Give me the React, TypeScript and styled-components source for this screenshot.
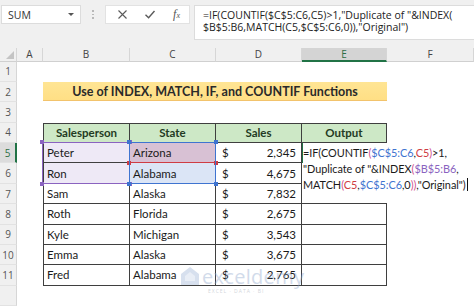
import styled, { createGlobalStyle } from "styled-components";

const GlobalStyle = createGlobalStyle`
  html, body {
    margin: 0;
    padding: 0;
    background: #ffffff;
  }
`;

const Window = styled.div`
  position: relative;
  width: 474px;
  height: 306px;
  overflow: hidden;
  display: flex;
  flex-direction: column;
  background: #f0f0f0;
  font-family: Lato, "Liberation Sans", sans-serif;
`;

const FormulaRow = styled.div`
  height: 49px;
  box-sizing: border-box;
  padding: 5px 0 0 1px;
  display: flex;
  align-items: flex-start;
`;

const NameBox = styled.div`
  width: 80px;
  height: 19px;
  box-sizing: border-box;
  background: #ffffff;
  border: 1px solid #dcdcdc;
  display: flex;
  align-items: center;
  justify-content: space-between;
  padding: 0 6px 0 6px;
  font-family: "Open Sans", sans-serif;
  font-size: 10.5px;
  color: #333;
`;

const DropArrow = styled.span`
  width: 0;
  height: 0;
  border-left: 3px solid transparent;
  border-right: 3px solid transparent;
  border-top: 3px solid #555;
`;

const Grip = styled.div`
  width: 24px;
  height: 19px;
  display: flex;
  flex-direction: column;
  align-items: center;
  justify-content: center;
  gap: 2px;
`;

const GripDot = styled.span`
  width: 1.5px;
  height: 1.5px;
  background: #b8b8b8;
`;

const FxGroup = styled.div`
  width: 85px;
  height: 19px;
  box-sizing: border-box;
  background: #ffffff;
  border: 1px solid #e2e2e2;
  display: grid;
  grid-template-columns: repeat(3, 27px);
  padding-left: 3px;
  align-items: center;
  justify-items: center;
  color: #5a5a5a;
`;

const FxText = styled.span`
  font-family: "Liberation Serif", serif;
  font-style: italic;
  font-size: 12px;
  color: #555;
  small {
    font-size: 8px;
  }
`;

const FormulaBox = styled.div`
  flex: 1;
  margin-left: 4px;
  height: 35px;
  box-sizing: border-box;
  background: #ffffff;
  border: 1px solid #dcdcdc;
  border-right: none;
  padding: 3px 0 0 8px;
  font-family: "Open Sans", sans-serif;
  font-size: 10.5px;
  line-height: 12px;
  color: #222;
  white-space: nowrap;
`;

const Sheet = styled.div`
  flex: 1;
  display: grid;
  grid-template-columns: 17px 26px 87px 86px 86px 85px 87px;
  grid-template-rows: 14px repeat(12, 20.36px);
  background: #ffffff;
`;

const ColHead = styled.div<{ $col: number; $active?: boolean }>`
  grid-row: 1;
  grid-column: ${(p) => p.$col};
  box-sizing: border-box;
  background: ${(p) => (p.$active ? "#d4d4d4" : "#f0f0f0")};
  border-right: 1px solid #d6d6d6;
  border-bottom: ${(p) => (p.$active ? "2px solid #217346" : "1px solid #d0d0d0")};
  display: flex;
  align-items: center;
  justify-content: center;
  font-family: "Open Sans", sans-serif;
  font-size: 10px;
  color: ${(p) => (p.$active ? "#2c6e45" : "#444")};
`;

const Corner = styled.div`
  grid-row: 1;
  grid-column: 1;
  box-sizing: border-box;
  background: #f0f0f0;
  border-right: 1px solid #d6d6d6;
  border-bottom: 1px solid #d0d0d0;
  position: relative;
  &::after {
    content: "";
    position: absolute;
    right: 2px;
    bottom: 2px;
    border-left: 8px solid transparent;
    border-bottom: 8px solid #c4c4c4;
  }
`;

const RowHead = styled.div<{ $row: number; $active?: boolean }>`
  grid-row: ${(p) => p.$row + 1};
  grid-column: 1;
  box-sizing: border-box;
  background: ${(p) => (p.$active ? "#dcdcdc" : "#f0f0f0")};
  border-right: ${(p) => (p.$active ? "2px solid #217346" : "1px solid #d6d6d6")};
  border-bottom: 1px solid #e2e2e2;
  display: flex;
  align-items: center;
  justify-content: center;
  font-family: "Open Sans", sans-serif;
  font-size: 10px;
  color: ${(p) => (p.$active ? "#2c6e45" : "#555")};
`;

const Cell = styled.div<{
  $row: number;
  $col: number;
  $grid?: boolean;
  $top?: boolean;
  $left?: boolean;
  $fill?: string;
  $head?: boolean;
  $num?: boolean;
}>`
  grid-row: ${(p) => p.$row + 1};
  grid-column: ${(p) => p.$col};
  box-sizing: border-box;
  background: ${(p) => p.$fill || "#ffffff"};
  border-right: ${(p) => (p.$grid ? "1px solid #3f3f3f" : "none")};
  border-bottom: ${(p) => (p.$grid ? "1px solid #3f3f3f" : "none")};
  border-top: ${(p) => (p.$top ? "1px solid #3f3f3f" : "none")};
  border-left: ${(p) => (p.$left ? "1px solid #3f3f3f" : "none")};
  display: flex;
  align-items: center;
  justify-content: ${(p) =>
    p.$head ? "center" : p.$num ? "space-between" : "flex-start"};
  padding: ${(p) => (p.$num ? "0 5px 0 6px" : "0 3px")};
  font-size: 11.5px;
  font-weight: ${(p) => (p.$head ? 700 : 400)};
  color: ${(p) => (p.$head ? "#233a23" : "#1a1a1a")};
  white-space: nowrap;
`;

const Title = styled.div`
  grid-row: 3;
  grid-column: 3 / 7;
  box-sizing: border-box;
  margin-bottom: 1px;
  background: linear-gradient(#ffe594, #ffdf85);
  border-bottom: 1px solid #f2c36c;
  display: flex;
  align-items: center;
  justify-content: center;
  font-size: 12.5px;
  font-weight: 700;
  color: #2a2a2a;
`;

const RangeBox = styled.div<{ $rows: string; $cols: string; $color: string }>`
  grid-row: ${(p) => p.$rows};
  grid-column: ${(p) => p.$cols};
  position: relative;
  z-index: 2;
  box-sizing: border-box;
  margin: -1px 0 0 -1px;
  border: 1px solid ${(p) => p.$color};
  pointer-events: none;
`;

const Handle = styled.span<{ $x: "l" | "r"; $y: "t" | "b"; $color: string }>`
  position: absolute;
  width: 4px;
  height: 4px;
  background: ${(p) => p.$color};
  ${(p) => (p.$x === "l" ? "left: -3px;" : "right: -3px;")}
  ${(p) => (p.$y === "t" ? "top: -3px;" : "bottom: -3px;")}
`;

const EditBox = styled.div`
  grid-row: 6 / 9;
  grid-column: 6 / 8;
  position: relative;
  z-index: 3;
  margin-bottom: 1px;
  background: #ffffff;
  padding: 2px 0 0 1px;
  font-size: 10.9px;
  letter-spacing: -0.05px;
  line-height: 16px;
  color: #1a1a1a;
  white-space: nowrap;
  &::before {
    content: "";
    position: absolute;
    left: 0;
    top: 0;
    width: 1px;
    height: 20px;
    background: #217346;
  }
`;

const Ref = styled.span<{ $c: string }>`
  color: ${(p) => p.$c};
`;

const Caret = styled.span`
  display: inline-block;
  width: 1px;
  height: 13px;
  margin-left: 1px;
  vertical-align: -2px;
  background: #111;
`;

const Watermark = styled.div`
  position: absolute;
  left: 180px;
  top: 266px;
  display: flex;
  align-items: flex-start;
  gap: 2px;
  opacity: 0.4;
  pointer-events: none;
`;

const MarkText = styled.div`
  display: flex;
  flex-direction: column;
  font-family: "Open Sans", sans-serif;
  color: #8fa6cc;
`;

const MarkWord = styled.span`
  font-size: 20px;
  line-height: 22px;
  letter-spacing: 0.3px;
`;

const MarkSub = styled.span`
  font-size: 5px;
  letter-spacing: 1px;
  color: #8f98a8;
  margin-left: 6px;
`;

const BLUE = "#3f74d0";
const RED = "#cf3c43";
const PURPLE = "#8a63c0";
const PAREN = "#d0508e";

const people = [
  ["Peter", "Arizona", "2,345"],
  ["Ron", "Alabama", "4,675"],
  ["Sam", "Alaska", "7,832"],
  ["Roth", "Florida", "2,675"],
  ["Kyle", "Michigan", "3,543"],
  ["Emma", "Alaska", "3,675"],
  ["Fred", "Alabama", "2,765"],
];

const cols = ["A", "B", "C", "D", "E", "F"];

function XIcon() {
  return (
    <svg width="11" height="11" viewBox="0 0 11 11">
      <path d="M1.5 1.5 L9.5 9.5 M9.5 1.5 L1.5 9.5" stroke="#5a5a5a" strokeWidth="1.1" fill="none" />
    </svg>
  );
}

function CheckIcon() {
  return (
    <svg width="12" height="11" viewBox="0 0 12 11">
      <path d="M1.5 5.8 L4.6 8.8 L10.5 2" stroke="#5a5a5a" strokeWidth="1.4" fill="none" />
    </svg>
  );
}

function Logo() {
  return (
    <svg width="20" height="20" viewBox="0 0 20 20">
      <path d="M10 1 L19 8 L19 19 L1 19 L1 8 Z" fill="#9db2d6" />
      <path d="M10 6 L15 10 L15 15 L5 15 L5 10 Z" fill="#c9d5ea" />
    </svg>
  );
}

function blankRow(r: number) {
  return cols.map((_, i) => <Cell key={`${r}-${i}`} $row={r} $col={i + 2} />);
}

export default function App() {
  return (
    <>
      <GlobalStyle />
      <Window>
        <FormulaRow>
          <NameBox>
            SUM
            <DropArrow />
          </NameBox>
          <Grip>
            <GripDot />
            <GripDot />
            <GripDot />
          </Grip>
          <FxGroup>
            <XIcon />
            <CheckIcon />
            <FxText>
              f<small>x</small>
            </FxText>
          </FxGroup>
          <FormulaBox>
            =IF(COUNTIF($C$5:C6,C5)&gt;1,"Duplicate of "&amp;INDEX(
            <br />
            $B$5:B6,MATCH(C5,$C$5:C6,0)),"Original")
          </FormulaBox>
        </FormulaRow>

        <Sheet>
          <Corner />
          {cols.map((c, i) => (
            <ColHead key={c} $col={i + 2} $active={c === "E"}>
              {c}
            </ColHead>
          ))}

          {Array.from({ length: 12 }, (_, i) => (
            <RowHead key={i} $row={i + 1} $active={i + 1 === 5}>
              {i + 1 <= 11 ? i + 1 : ""}
            </RowHead>
          ))}

          {blankRow(1)}

          <Cell $row={2} $col={2} />
          <Title>Use of INDEX, MATCH, IF, and COUNTIF Functions</Title>
          <Cell $row={2} $col={7} />

          {blankRow(3)}

          <Cell $row={4} $col={2} />
          {["Salesperson", "State", "Sales", "Output"].map((h, i) => (
            <Cell
              key={h}
              $row={4}
              $col={i + 3}
              $grid
              $top
              $left={i === 0}
              $head
              $fill="#cde8c6"
            >
              {h}
            </Cell>
          ))}
          <Cell $row={4} $col={7} />

          {people.map(([name, state, sales], i) => {
            const r = i + 5;
            return [
              <Cell key={`${r}a`} $row={r} $col={2} />,
              <Cell
                key={`${r}b`}
                $row={r}
                $col={3}
                $grid
                $left
                $fill={r <= 6 ? "#eee9f6" : undefined}
              >
                {name}
              </Cell>,
              <Cell
                key={`${r}c`}
                $row={r}
                $col={4}
                $grid
                $fill={r === 5 ? "#d8c1d4" : r === 6 ? "#dbe5f6" : undefined}
              >
                {state}
              </Cell>,
              <Cell key={`${r}d`} $row={r} $col={5} $grid $num>
                <span>$</span>
                <span>{sales}</span>
              </Cell>,
              <Cell key={`${r}e`} $row={r} $col={6} $grid />,
              <Cell key={`${r}f`} $row={r} $col={7} />,
            ];
          })}

          {blankRow(12)}

          <RangeBox $rows="6 / 8" $cols="3 / 4" $color={PURPLE}>
            <Handle $x="l" $y="t" $color={PURPLE} />
            <Handle $x="r" $y="t" $color={PURPLE} />
            <Handle $x="l" $y="b" $color={PURPLE} />
            <Handle $x="r" $y="b" $color={PURPLE} />
          </RangeBox>
          <RangeBox $rows="6 / 7" $cols="4 / 5" $color={RED}>
            <Handle $x="l" $y="t" $color={RED} />
            <Handle $x="r" $y="t" $color={RED} />
            <Handle $x="l" $y="b" $color={RED} />
            <Handle $x="r" $y="b" $color={RED} />
          </RangeBox>
          <RangeBox $rows="6 / 8" $cols="4 / 5" $color={BLUE}>
            <Handle $x="l" $y="t" $color={BLUE} />
            <Handle $x="r" $y="t" $color={BLUE} />
            <Handle $x="l" $y="b" $color={BLUE} />
            <Handle $x="r" $y="b" $color={BLUE} />
          </RangeBox>

          <EditBox>
            =IF(COUNTIF<Ref $c={PAREN}>(</Ref>
            <Ref $c={BLUE}>$C$5:C6</Ref>,<Ref $c={RED}>C5</Ref>
            <Ref $c={PAREN}>)</Ref>&gt;1,
            <br />
            "Duplicate of "&amp;INDEX<Ref $c={PAREN}>(</Ref>
            <Ref $c={PURPLE}>$B$5:B6</Ref>,
            <br />
            MATCH<Ref $c={PAREN}>(</Ref>
            <Ref $c={RED}>C5</Ref>,<Ref $c={BLUE}>$C$5:C6</Ref>,0
            <Ref $c={PAREN}>)</Ref>
            <Ref $c={PAREN}>)</Ref>,"Original")
            <Caret />
          </EditBox>
        </Sheet>

        <Watermark>
          <Logo />
          <MarkText>
            <MarkWord>exceldemy</MarkWord>
            <MarkSub>EXCEL · DATA · BI</MarkSub>
          </MarkText>
        </Watermark>
      </Window>
    </>
  );
}
